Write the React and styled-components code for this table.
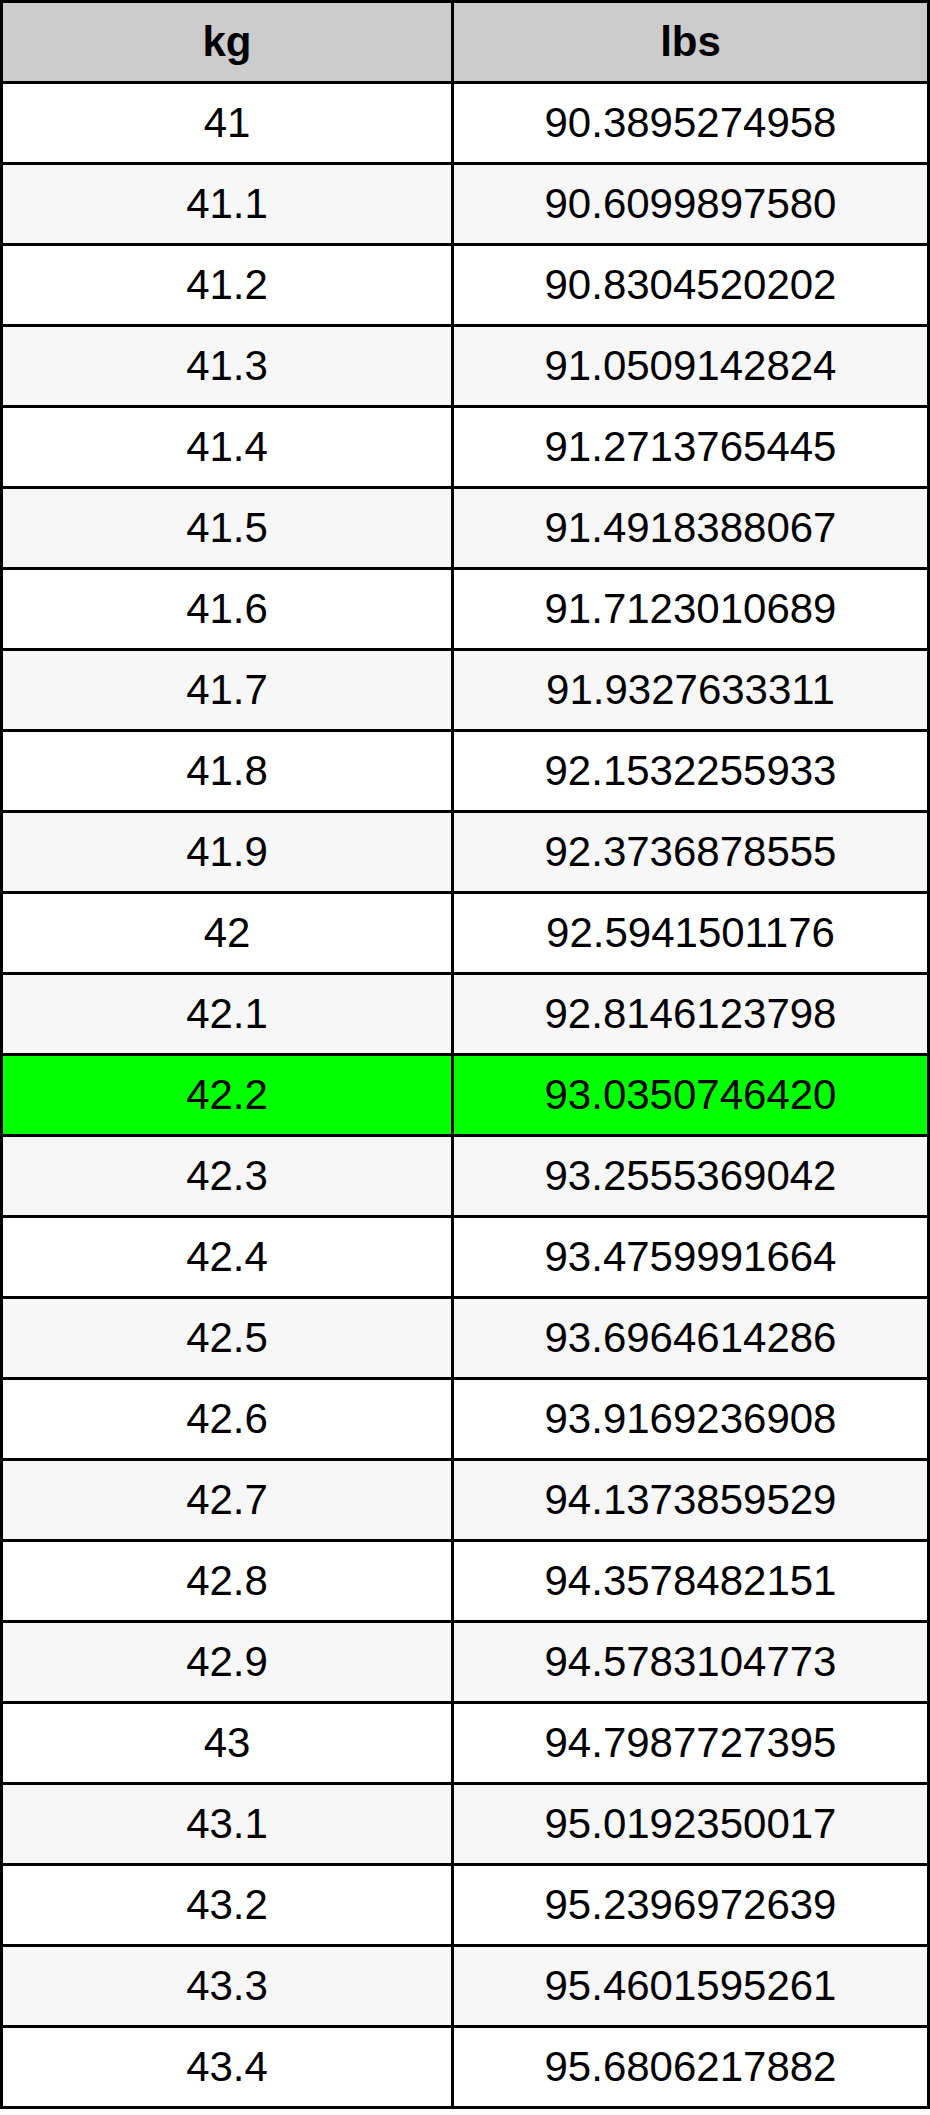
import React from "react";
import styled, { createGlobalStyle } from "styled-components";

const GlobalStyle = createGlobalStyle`
    body {
        margin: 0;
        background: #ffffff;
        font-family: "Liberation Sans", Arial, sans-serif;
    }
`;

const Table = styled.table`
    width: 930px;
    border-collapse: collapse;
    table-layout: fixed;
    font-family: "Liberation Sans", Arial, sans-serif;
    font-size: 42px;
    color: #000000;
`;

const HeadCell = styled.th`
    background: #cccccc;
    border: 3px solid #000000;
    height: 78px;
    padding: 0;
    font-weight: bold;
    text-align: center;
`;

const Row = styled.tr`
    background: ${props =>
        props.$highlight ? "#00ff00" : props.$odd ? "#f7f7f7" : "#ffffff"};
`;

const Cell = styled.td`
    border: 3px solid #000000;
    height: 78px;
    padding: 0;
    text-align: center;
`;

const rows = [
    ["41", "90.3895274958"],
    ["41.1", "90.6099897580"],
    ["41.2", "90.8304520202"],
    ["41.3", "91.0509142824"],
    ["41.4", "91.2713765445"],
    ["41.5", "91.4918388067"],
    ["41.6", "91.7123010689"],
    ["41.7", "91.9327633311"],
    ["41.8", "92.1532255933"],
    ["41.9", "92.3736878555"],
    ["42", "92.5941501176"],
    ["42.1", "92.8146123798"],
    ["42.2", "93.0350746420"],
    ["42.3", "93.2555369042"],
    ["42.4", "93.4759991664"],
    ["42.5", "93.6964614286"],
    ["42.6", "93.9169236908"],
    ["42.7", "94.1373859529"],
    ["42.8", "94.3578482151"],
    ["42.9", "94.5783104773"],
    ["43", "94.7987727395"],
    ["43.1", "95.0192350017"],
    ["43.2", "95.2396972639"],
    ["43.3", "95.4601595261"],
    ["43.4", "95.6806217882"]
];

export default () => {
    return (
        <>
            <GlobalStyle />
            <Table>
                <colgroup>
                    <col style={{ width: "451px" }} />
                    <col />
                </colgroup>
                <thead>
                    <tr>
                        <HeadCell>kg</HeadCell>
                        <HeadCell>lbs</HeadCell>
                    </tr>
                </thead>
                <tbody>
                    {rows.map(([kg, lbs], i) => (
                        <Row key={kg} $odd={i % 2 === 1} $highlight={kg === "42.2"}>
                            <Cell>{kg}</Cell>
                            <Cell>{lbs}</Cell>
                        </Row>
                    ))}
                </tbody>
            </Table>
        </>
    );
};
